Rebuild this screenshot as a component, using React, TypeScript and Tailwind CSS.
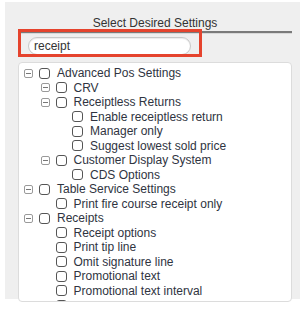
import React from "react";

type Row = { label: string; level: number; expander?: boolean };

const rows: Row[] = [
  { label: "Advanced Pos Settings", level: 0, expander: true },
  { label: "CRV", level: 1, expander: true },
  { label: "Receiptless Returns", level: 1, expander: true },
  { label: "Enable receiptless return", level: 2 },
  { label: "Manager only", level: 2 },
  { label: "Suggest lowest sold price", level: 2 },
  { label: "Customer Display System", level: 1, expander: true },
  { label: "CDS Options", level: 2 },
  { label: "Table Service Settings", level: 0, expander: true },
  { label: "Print fire course receipt only", level: 1 },
  { label: "Receipts", level: 0, expander: true },
  { label: "Receipt options", level: 1 },
  { label: "Print tip line", level: 1 },
  { label: "Omit signature line", level: 1 },
  { label: "Promotional text", level: 1 },
  { label: "Promotional text interval", level: 1 },
  { label: "", level: 1 },
];

function Expander() {
  return (
    <span className="flex h-[9px] w-[9px] items-center justify-center rounded-[2px] border border-[#9a9a9a] bg-white">
      <span className="h-[1px] w-[5px] bg-[#777]" />
    </span>
  );
}

function Checkbox() {
  return <span className="block h-[11px] w-[11px] rounded-[3px] border border-[#555] bg-white" />;
}

export default function App() {
  return (
    <div className="h-[309px] w-[300px] bg-white pt-[2px] pl-[5px]" style={{ fontFamily: "Helvetica, 'Liberation Sans', Arial, sans-serif" }}>
      <div className="relative flex h-[297px] w-[295px] flex-col bg-[#efefef] pl-[13px] pr-[8px] pt-[14px]">
        <div className="h-[14px] shrink-0 text-center text-[12px] leading-[14px] text-[#333]">Select Desired Settings</div>
        <div className="mt-[1px] h-[2px] w-full shrink-0 bg-[#7a7a7a] shadow-[0_1px_0_#d8d8d8]" />
        <div className="mt-[4px] ml-[10px] flex h-[18px] w-[163px] shrink-0 items-center rounded-full border border-[#c8c8c8] bg-white pl-[5px] shadow-[inset_0_1px_1px_rgba(0,0,0,0.08)]">
          <span className="text-[12px] leading-none text-[#333]">receipt</span>
        </div>
        <div className="mt-[7px] h-[240px] w-[274px] shrink-0 overflow-hidden rounded-[4px] border border-[#dcdcdc] bg-white pt-[3px]">
          {rows.map((r, i) => (
            <div
              key={i}
              className="flex h-[14.5px] items-center"
              style={{ paddingLeft: 5 + r.level * 16.5 }}
            >
              <span className="flex w-[15px] shrink-0 items-center">{r.expander ? <Expander /> : null}</span>
              <Checkbox />
              {r.label ? (
                <span className="ml-[7px] whitespace-nowrap text-[12px] leading-[14px] text-[#2f3441]">{r.label}</span>
              ) : null}
            </div>
          ))}
        </div>
        <div className="pointer-events-none absolute left-[13px] top-[27px] h-[28px] w-[184px] border-[3px] border-[#e5432d]" />
      </div>
    </div>
  );
}
